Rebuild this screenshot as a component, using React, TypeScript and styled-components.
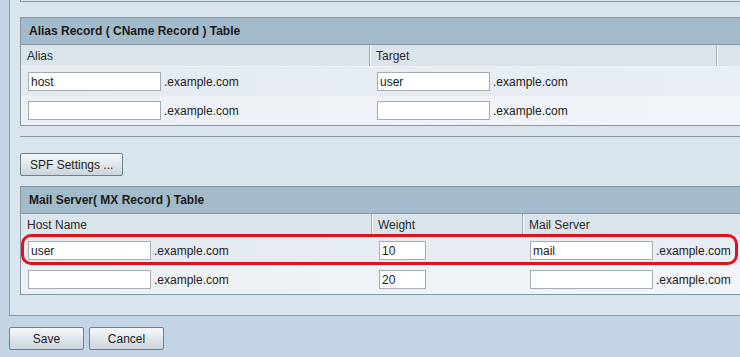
import styled, { createGlobalStyle } from "styled-components";

const GlobalStyle = createGlobalStyle`
  html, body {
    margin: 0;
    padding: 0;
    overflow: hidden;
    background: #c3d5e5;
  }
  body {
    font-family: "Liberation Sans", Arial, sans-serif;
    font-size: 12px;
    color: #1e1e1e;
  }
`;

const BORDER = "#8798a5";

type Col = { label: string };

type Field = { value?: string; width: number; suffix?: boolean };

export default function App() {
  const aliasCols: Col[] = [{ label: "Alias" }, { label: "Target" }, { label: "" }];
  const aliasRows: Field[][] = [
    [{ value: "host", width: 133, suffix: true }, { value: "user", width: 113, suffix: true }],
    [{ width: 133, suffix: true }, { width: 113, suffix: true }],
  ];

  const mailCols: Col[] = [{ label: "Host Name" }, { label: "Weight" }, { label: "Mail Server" }];
  const mailRows: Field[][] = [
    [
      { value: "user", width: 123, suffix: true },
      { value: "10", width: 47 },
      { value: "mail", width: 123, suffix: true },
    ],
    [{ width: 123, suffix: true }, { value: "20", width: 47 }, { width: 123, suffix: true }],
  ];

  return (
    <Page>
      <GlobalStyle />
      <Panel>
        <PrevTableEnd />

        <Table $top={15}>
          <Title>Alias Record ( CName Record ) Table</Title>
          <HeadRow $cols="349px 347px 1fr">
            {aliasCols.map((c, i) => (
              <HeadCell key={i} $first={i === 0}>{c.label}</HeadCell>
            ))}
          </HeadRow>
          {aliasRows.map((row, r) => (
            <DataRow key={r} $cols="349px 347px 1fr" $alt={r % 2 === 1}>
              {row.map((f, i) => (
                <Cell key={i}>
                  <TextInput readOnly value={f.value ?? ""} $width={f.width} />
                  {f.suffix && <Suffix>.example.com</Suffix>}
                </Cell>
              ))}
              <Cell />
            </DataRow>
          ))}
        </Table>

        <Separator />

        <Button $width={103} $align="left">SPF Settings ...</Button>

        <Table $top={10}>
          <Title>Mail Server( MX Record ) Table</Title>
          <HeadRow $cols="351px 151px 1fr">
            {mailCols.map((c, i) => (
              <HeadCell key={i} $first={i === 0}>{c.label}</HeadCell>
            ))}
          </HeadRow>
          {mailRows.map((row, r) => (
            <DataRow key={r} $cols="351px 151px 1fr" $alt={r % 2 === 1}>
              {r === 0 && <Highlight />}
              {row.map((f, i) => (
                <Cell key={i}>
                  <TextInput readOnly value={f.value ?? ""} $width={f.width} />
                  {f.suffix && <Suffix>.example.com</Suffix>}
                </Cell>
              ))}
            </DataRow>
          ))}
        </Table>
      </Panel>

      <Actions>
        <Button $width={75}>Save</Button>
        <Button $width={75}>Cancel</Button>
      </Actions>
    </Page>
  );
}

const Page = styled.div`
  padding-left: 9px;
`;

const Panel = styled.div`
  background: #dae4ed;
  border: 1px solid ${BORDER};
  border-top: none;
  border-right: none;
  padding: 0 0 20px 10px;
`;

const PrevTableEnd = styled.div`
  height: 1px;
  border-left: 1px solid ${BORDER};
  border-bottom: 1px solid ${BORDER};
`;

const Table = styled.div<{ $top: number }>`
  margin-top: ${(p) => p.$top}px;
  border: 1px solid ${BORDER};
  border-right: none;
`;

const Title = styled.div`
  height: 26px;
  display: flex;
  align-items: center;
  padding-left: 8px;
  background: #a3bacb;
  border-bottom: 1px solid ${BORDER};
  font-weight: bold;
  color: #1a1a1a;
`;

const HeadRow = styled.div<{ $cols: string }>`
  display: grid;
  grid-template-columns: ${(p) => p.$cols};
  height: 21px;
  background: #dce4eb;
  border-bottom: 1px solid #eef2f6;
`;

const HeadCell = styled.div<{ $first: boolean }>`
  display: flex;
  align-items: center;
  padding-left: ${(p) => (p.$first ? 6 : 5)}px;
  border-right: 1px solid #a3afb9;
  border-left: ${(p) => (p.$first ? "none" : "1px solid #f6f8fa")};
  color: #2a2a2a;
  &:last-child {
    border-right: none;
  }
`;

const DataRow = styled.div<{ $cols: string; $alt: boolean }>`
  position: relative;
  display: grid;
  grid-template-columns: ${(p) => p.$cols};
  height: 29px;
  background: ${(p) =>
    p.$alt
      ? "linear-gradient(90deg, #ecf0f5, #f1f4f8)"
      : "linear-gradient(90deg, #e3eaf0, #e9eef4)"};
`;

const Cell = styled.div`
  display: flex;
  align-items: center;
  padding-left: 7px;
  white-space: nowrap;
  min-width: 0;
`;

const TextInput = styled.input<{ $width: number }>`
  box-sizing: border-box;
  width: ${(p) => p.$width}px;
  height: 19px;
  margin: 0;
  padding: 0 2px;
  border: 1px solid #a6acb2;
  background: #fff;
  font-family: "Liberation Sans", Arial, sans-serif;
  font-size: 12px;
  color: #1a1a1a;
  outline: none;
`;

const Suffix = styled.span`
  margin-left: 3px;
  color: #222;
`;

const Highlight = styled.div`
  position: absolute;
  left: 0;
  top: -2px;
  width: 717px;
  height: 31px;
  box-sizing: border-box;
  border: 3px solid #e0131c;
  border-radius: 10px;
  pointer-events: none;
`;

const Separator = styled.div`
  margin-top: 10px;
  border-top: 1px solid ${BORDER};
`;

const Button = styled.button<{ $width: number; $align?: "left" | "center" }>`
  display: block;
  box-sizing: border-box;
  width: ${(p) => p.$width}px;
  height: 23px;
  margin: 16px 0 0 0;
  padding: ${(p) => (p.$align === "left" ? "0 0 0 9px" : "0")};
  text-align: ${(p) => p.$align ?? "center"};
  border: 1px solid #6f808d;
  border-radius: 2px;
  background: linear-gradient(#f5f7f9, #dfe5ea 55%, #cbd4dc);
  font-family: "Liberation Sans", Arial, sans-serif;
  font-size: 12px;
  color: #1e1e1e;
`;

const Actions = styled.div`
  display: flex;
  gap: 5px;
  margin-top: 11px;

  & > ${Button} {
    margin: 0;
  }
`;
